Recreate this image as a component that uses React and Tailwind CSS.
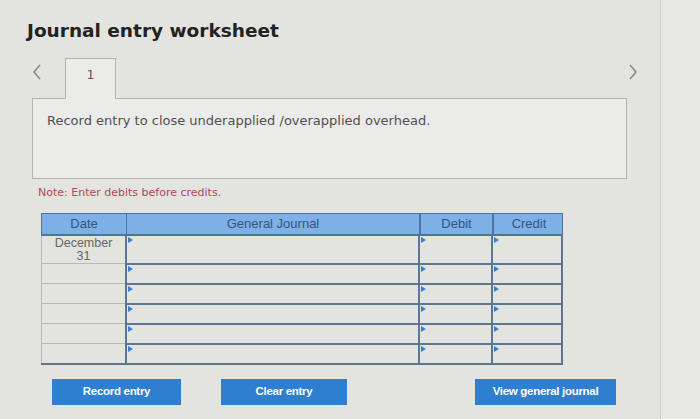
import React from "react";

const rows = [0, 1, 2, 3, 4, 5];

function Tri() {
  return (
    <span className="absolute left-[1px] top-[1px] w-0 h-0 border-t-[3px] border-b-[3px] border-l-[5px] border-t-transparent border-b-transparent border-l-[#3b7fd4]" />
  );
}

export default function App() {
  return (
    <div className="w-[700px] h-[419px] flex bg-[#e3e3e0] overflow-hidden" style={{ fontFamily: '"DejaVu Sans", Verdana, sans-serif' }}>
      <div className="w-[660px] flex flex-col">
        <h1 className="pl-[27px] pt-[18px] text-[18.5px] leading-[25px] font-bold text-[#222]">Journal entry worksheet</h1>
        <div className="flex items-end h-[41px] mt-[14px] relative z-10">
          <div className="w-[65px] flex justify-start pl-[31px] pb-[18px] text-[#8a8a8a]">
            <svg width="12" height="16" viewBox="0 0 12 16"><path d="M9 1 L3 8 L9 15" fill="none" stroke="currentColor" strokeWidth="1.6" /></svg>
          </div>
          <div className="w-[51px] h-[41px] border border-b-0 border-[#b3b3b0] bg-[#ebebe9] -mb-px flex justify-center pt-[7px] text-[12px] text-[#555]">1</div>
          <div className="flex-1" />
          <div className="w-[33px] pb-[18px] text-[#8a8a8a]">
            <svg width="12" height="16" viewBox="0 0 12 16"><path d="M3 1 L9 8 L3 15" fill="none" stroke="currentColor" strokeWidth="1.6" /></svg>
          </div>
        </div>
        <div className="ml-[32px] w-[595px] h-[81px] border border-[#b3b3b0] bg-[#ebebe9] pl-[14px] pt-[13px] text-[13px] leading-[17px] text-[#505050]">
          Record entry to close underapplied /overapplied overhead.
        </div>
        <div className="ml-[38px] mt-[6px] text-[11px] leading-[15px] text-[#b04a55]">Note: Enter debits before credits.</div>
        <div className="ml-[41px] mt-[13px] w-[522px]" style={{ fontFamily: '"Liberation Sans", Arial, sans-serif' }}>
          <div className="grid grid-cols-[84px_293px_73px_72px] h-[23px] bg-[#7db0e6] border border-[#4f739f] border-b-2 text-[13px] text-[#34557d]">
            <div className="flex items-center justify-center">Date</div>
            <div className="flex items-center justify-center border-l border-[#4f739f]">General Journal</div>
            <div className="flex items-center justify-center border-l-2 border-[#4f739f]">Debit</div>
            <div className="flex items-center justify-center border-l-2 border-[#4f739f]">Credit</div>
          </div>
          <div className="border-b-2 border-[#5d7694]">
            {rows.map((r) => (
              <div key={r} className={`grid grid-cols-[84px_293px_73px_72px] ${r === 0 ? "h-[27px]" : "h-[20px]"}`}>
                <div className={`border-l border-[#b9b9b6] ${r > 0 ? "border-t" : ""} text-[12.5px] leading-[12.5px] text-[#666] text-center pt-[1px]`}>
                  {r === 0 ? (<><div>December</div><div>31</div></>) : null}
                </div>
                <div className={`relative border-l-2 border-[#5d7694] ${r > 0 ? "border-t-2" : ""}`}><Tri /></div>
                <div className={`relative border-l-2 border-[#5d7694] ${r > 0 ? "border-t-2" : ""}`}><Tri /></div>
                <div className={`relative border-l-2 border-r-2 border-[#5d7694] ${r > 0 ? "border-t-2" : ""}`}><Tri /></div>
              </div>
            ))}
          </div>
        </div>
        <div className="flex mt-[14px] text-[11.5px] font-bold text-white" style={{ fontFamily: '"Liberation Sans", Arial, sans-serif' }}>
          <button className="ml-[52px] w-[129px] h-[26px] bg-[#2f7fd1] tracking-[-0.3px]">Record entry</button>
          <button className="ml-[40px] w-[126px] h-[26px] bg-[#2f7fd1] tracking-[-0.3px]">Clear entry</button>
          <button className="ml-[128px] w-[141px] h-[26px] bg-[#2f7fd1] tracking-[-0.3px]">View general journal</button>
        </div>
      </div>
      <div className="flex-1 border-l border-[#cfcfcb] bg-[#e8e8e5]" />
    </div>
  );
}
